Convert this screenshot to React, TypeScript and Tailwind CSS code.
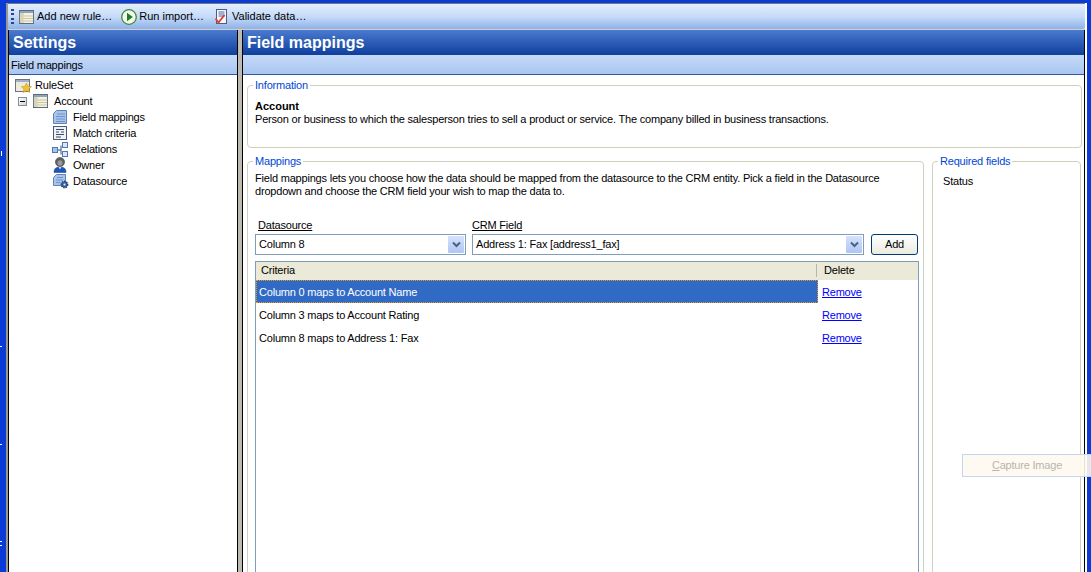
import type { ReactNode } from "react";

function SheetIcon({ className = "" }: { className?: string }) {
  return (
    <svg viewBox="0 0 16 14" preserveAspectRatio="none" className={className}>
      <rect x="0.500" y="0.500" width="15" height="13" fill="#f4f1de" stroke="#5f6b7a" />
      <rect x="1" y="1" width="14" height="2" fill="#8ba3c4" />
      <rect x="1" y="3" width="4" height="10" fill="#d9d4b4" />
      <path d="M5 6h10M5 8.500h10M5 11h10" stroke="#c9c5a4" />
    </svg>
  );
}

function RuleSetIcon() {
  return (
    <svg viewBox="0 0 17 15" className="w-[17px] h-[15px] shrink-0">
      <rect x="0.500" y="1.500" width="14" height="12" fill="#ecebdc" stroke="#6d7480" />
      <rect x="1" y="2" width="13" height="2" fill="#9fb0c6" />
      <path d="M11.500 5l1.600 3.300 3.400.4-2.500 2.300.7 3.500-3.200-1.700-3.200 1.700.7-3.500-2.500-2.300 3.400-.4z" fill="#f2c230" stroke="#b98a12" strokeWidth="0.500" />
    </svg>
  );
}

function PageIcon() {
  return (
    <svg viewBox="0 0 14 14" className="w-[14px] h-[14px]">
      <path d="M3.500.5h10v13h-13v-10z" fill="#a9c3ea" stroke="#5b84bd" />
      <path d="M4 4h8M3 6.500h9M3 9h9M3 11.500h9" stroke="#6f94cc" />
    </svg>
  );
}

function MatchIcon() {
  return (
    <svg viewBox="0 0 14 14" className="w-[14px] h-[14px]">
      <rect x="0.500" y="0.500" width="13" height="13" fill="#eef1f6" stroke="#4a5a70" />
      <path d="M3 3.500h8M3 6h3M8 6h3M3 8.500h8M3 11h5" stroke="#3d4b5f" />
    </svg>
  );
}

function RelationsIcon() {
  return (
    <svg viewBox="0 0 16 15" className="w-[16px] h-[15px] -ml-px">
      <path d="M6 8h3M9 3.500v9" stroke="#2f4f86" fill="none" />
      <rect x="0.500" y="5.500" width="5" height="5" fill="#a9c3ea" stroke="#4f78b5" />
      <rect x="10.500" y="0.500" width="5" height="5" fill="#dbe7f8" stroke="#4f78b5" />
      <rect x="10.500" y="9.500" width="5" height="5" fill="#dbe7f8" stroke="#4f78b5" />
    </svg>
  );
}

function OwnerIcon() {
  return (
    <svg viewBox="0 0 14 16" className="w-[14px] h-[16px]">
      <path d="M1 15.500c0-4 2-5.500 6-5.500s6 1.500 6 5.500z" fill="#1f55b8" stroke="#173f8a" strokeWidth="0.500" />
      <path d="M5.500 10l1.500 2.500L8.500 10z" fill="#cfdcf2" />
      <circle cx="7" cy="5" r="4.600" fill="#5f5f5f" stroke="#3c3c3c" strokeWidth="0.500" />
      <ellipse cx="7" cy="6" rx="2.500" ry="2.800" fill="#999999" />
    </svg>
  );
}

function DatasourceIcon() {
  return (
    <svg viewBox="0 0 16 15" className="w-[16px] h-[15px]">
      <path d="M3.500.5h9v11h-12v-8z" fill="#a9c3ea" stroke="#5b84bd" />
      <path d="M4 3.500h6M3 6h7M3 8.500h4" stroke="#6f94cc" />
      <circle cx="11.500" cy="10.500" r="3" fill="#3f68a8" stroke="#27467a" strokeDasharray="1.500 0.700" strokeWidth="1.800" />
      <circle cx="11.500" cy="10.500" r="1" fill="#e6eefb" />
    </svg>
  );
}

function RunIcon() {
  return (
    <svg viewBox="0 0 16 16" className="w-4 h-4 shrink-0">
      <circle cx="8" cy="8" r="7.300" fill="#f4f7ea" stroke="#3c8a3a" strokeWidth="1.300" />
      <path d="M6 3.800v8.400l5.800-4.200z" fill="#1d7a26" />
    </svg>
  );
}

function ValidateIcon() {
  return (
    <svg viewBox="0 0 13 15" className="w-[13px] h-[15px] shrink-0">
      <rect x="1.500" y="0.500" width="10" height="14" fill="#f4f6fb" stroke="#4a5f80" />
      <path d="M3.500 3h6M3.500 5h6M3.500 7h6" stroke="#4a6ca8" />
      <path d="M0.500 9.500l3 4 6-7.500" fill="none" stroke="#d8402a" strokeWidth="1.800" />
    </svg>
  );
}

function TreeChild({ icon, label }: { icon: ReactNode; label: string }) {
  return (
    <div className="flex items-center h-4 pl-[44px]">
      <span className="w-[20px] flex">{icon}</span>
      <span>{label}</span>
    </div>
  );
}

function Group({ title, className, children }: { title: string; className: string; children: ReactNode }) {
  return (
    <fieldset className={`border border-[#d0d0bf] rounded-[4px] shrink-0 ${className}`}>
      <legend className="ml-[5px] px-[2px] text-[#0046d5] leading-[13px]">{title}</legend>
      {children}
    </fieldset>
  );
}

function Combo({ value, className }: { value: string; className: string }) {
  return (
    <div className={`flex items-center h-[21px] border border-[#7f9db9] bg-white pl-[3px] pr-px ${className}`}>
      <span className="flex-1">{value}</span>
      <span className="w-[16px] h-[17px] bg-gradient-to-b from-[#d5e2fb] to-[#aec6f4] rounded-[1px] flex items-center justify-center">
        <svg viewBox="0 0 9 7" className="w-[9px] h-[7px]">
          <path d="M1 1.500l3.500 3.500L8 1.500" fill="none" stroke="#4d6185" strokeWidth="2" />
        </svg>
      </span>
    </div>
  );
}

function Row({ text, selected = false }: { text: string; selected?: boolean }) {
  return (
    <div className="flex h-[23px] items-center">
      <div
        className={
          selected
            ? "w-[562px] h-[23px] flex items-center pl-[2px] pt-px bg-[#316ac5] text-white border border-dotted border-[#e89a1c]"
            : "w-[562px] pl-[3px] pt-px"
        }
      >
        {text}
      </div>
      <a className="ml-[4px] pt-px text-[#0000ff] underline">Remove</a>
    </div>
  );
}

function PanelHeader({ title, sub }: { title: string; sub: string }) {
  return (
    <>
      <div className="h-[25px] shrink-0 flex items-center pl-[4px] bg-gradient-to-b from-[#4a7bd0] to-[#0e3f9c] text-white font-bold text-[16px] leading-none tracking-normal">
        {title}
      </div>
      <div className="h-[20px] shrink-0 flex items-center pl-[2px] pt-px bg-gradient-to-b from-[#c6daf8] to-[#a9c6f1] border-b border-[#2f5aa0]">
        {sub}
      </div>
    </>
  );
}

export default function App() {
  return (
    <div className="relative w-[1091px] h-[572px] overflow-hidden flex flex-col bg-[#0a3bd6] text-[11px] leading-[13px] tracking-[-0.2px] text-black font-['Liberation_Sans',Arial,sans-serif]">
      <div className="h-[3px] shrink-0 bg-[#0a3bd6]" />
      <div className="flex-1 flex min-h-0">
        <div className="w-[6px] shrink-0 bg-[#0a3bd6]" />
        <div className="w-[2px] shrink-0 bg-[#9a9a92]" />
        <div className="flex-1 flex flex-col min-w-0 bg-[#d4d0c8]">
          <div className="h-px shrink-0 bg-[#77787a]" />
          <div className="h-[25px] shrink-0 flex items-center tracking-normal bg-gradient-to-b from-[#e3eefd] via-[#c6dbf9] to-[#8fb2e8] rounded-br-[3px]">
            <div className="ml-[3px] w-[3px] h-[16px] flex flex-col justify-between">
              <span className="h-[2px] bg-[#27458a]" />
              <span className="h-[2px] bg-[#27458a]" />
              <span className="h-[2px] bg-[#27458a]" />
              <span className="h-[2px] bg-[#27458a]" />
            </div>
            <div className="ml-[5px] flex items-center gap-[3px]">
              <SheetIcon className="w-[15px] h-[14px]" />
              <span>Add new rule…</span>
            </div>
            <div className="ml-[9px] flex items-center gap-[2px]">
              <RunIcon />
              <span>Run import…</span>
            </div>
            <div className="ml-[11px] flex items-center gap-[4px]">
              <ValidateIcon />
              <span>Validate data…</span>
            </div>
          </div>
          <div className="h-px shrink-0 bg-[#d4d0c8]" />
          <div className="flex-1 flex min-h-0">
            <div className="w-[230px] shrink-0 flex flex-col bg-white border-x border-black">
              <PanelHeader title="Settings" sub="Field mappings" />
              <div className="pt-[2px]">
                <div className="flex items-center h-4 pl-[6px] gap-[3px]">
                  <RuleSetIcon />
                  <span>RuleSet</span>
                </div>
                <div className="flex items-center h-4 pl-[9px]">
                  <span className="w-[9px] h-[9px] border border-[#7f8f9f] bg-gradient-to-br from-white to-[#d8d4c4] flex items-center justify-center">
                    <span className="w-[5px] h-px bg-black" />
                  </span>
                  <SheetIcon className="w-[15px] h-[14px] ml-[6px]" />
                  <span className="ml-[6px]">Account</span>
                </div>
                <TreeChild icon={<PageIcon />} label="Field mappings" />
                <TreeChild icon={<MatchIcon />} label="Match criteria" />
                <TreeChild icon={<RelationsIcon />} label="Relations" />
                <TreeChild icon={<OwnerIcon />} label="Owner" />
                <TreeChild icon={<DatasourceIcon />} label="Datasource" />
              </div>
            </div>
            <div className="w-[4px] shrink-0 bg-[#bdbab0]" />
            <div className="flex-1 min-w-0 flex flex-col bg-white border-x border-black">
              <PanelHeader title="Field mappings" sub="" />
              <div className="flex flex-col pl-[4px] pr-[2px] pt-[4px] gap-[7px]">
                <Group title="Information" className="h-[69px]">
                  <div className="pt-[8px] px-[7px]">
                    <div className="font-bold tracking-normal">Account</div>
                    <div>Person or business to which the salesperson tries to sell a product or service. The company billed in business transactions.</div>
                  </div>
                </Group>
                <div className="flex gap-[8px]">
                  <Group title="Mappings" className="w-[677px] h-[440px]">
                    <div className="pl-[7px] pr-[4px]">
                      <p className="pt-[4px] pr-[16px]">
                        Field mappings lets you choose how the data should be mapped from the datasource to the CRM entity. Pick a field in the Datasource dropdown and choose the CRM field your wish to map the data to.
                      </p>
                      <div className="flex mt-[21px] pl-[3px]">
                        <span className="w-[214px] underline">Datasource</span>
                        <span className="underline">CRM Field</span>
                      </div>
                      <div className="flex items-center mt-[2px]">
                        <Combo value="Column 8" className="w-[211px]" />
                        <Combo value="Address 1: Fax [address1_fax]" className="w-[392px] ml-[6px]" />
                        <button className="w-[47px] h-[21px] ml-[7px] border border-[#003c74] rounded-[3px] bg-gradient-to-b from-white to-[#ecebe0]">Add</button>
                      </div>
                      <div className="mt-[6px] h-[400px] w-[664px] border border-[#7f9db9]">
                        <div className="flex h-[18px] items-center pb-px bg-[#ebe9d8]">
                          <span className="w-[561px] pl-[5px] border-r border-[#b8b6a8] h-[13px] leading-[13px]">Criteria</span>
                          <span className="pl-[7px]">Delete</span>
                        </div>
                        <Row text="Column 0 maps to Account Name" selected />
                        <Row text="Column 3 maps to Account Rating" />
                        <Row text="Column 8 maps to Address 1: Fax" />
                      </div>
                    </div>
                  </Group>
                  <Group title="Required fields" className="w-[149px] h-[440px]">
                    <div className="pt-[7px] pl-[10px]">Status</div>
                  </Group>
                </div>
              </div>
            </div>
          </div>
        </div>
        <div className="w-[2px] shrink-0 bg-white" />
        <div className="w-[4px] shrink-0 bg-[#0a3bd6]" />
      </div>
      <div className="absolute left-[962px] top-[454px] w-[130px] h-[23px] border border-[#c5d6f5] bg-[#fefaf0]/90 text-[#b8b5ac] text-center leading-[21px]">
        <span className="underline decoration-[#b8b5ac]">C</span>apture Image
      </div>
      <span className="absolute left-px top-[151px] w-px h-[5px] bg-white" />
      <span className="absolute left-0 top-[346px] w-[2px] h-px bg-white" />
      <span className="absolute left-0 top-[444px] w-[2px] h-px bg-white" />
      <span className="absolute left-0 top-[541px] w-[2px] h-px bg-white" />
      <span className="absolute left-0 top-[545px] w-[2px] h-px bg-white" />
    </div>
  );
}
